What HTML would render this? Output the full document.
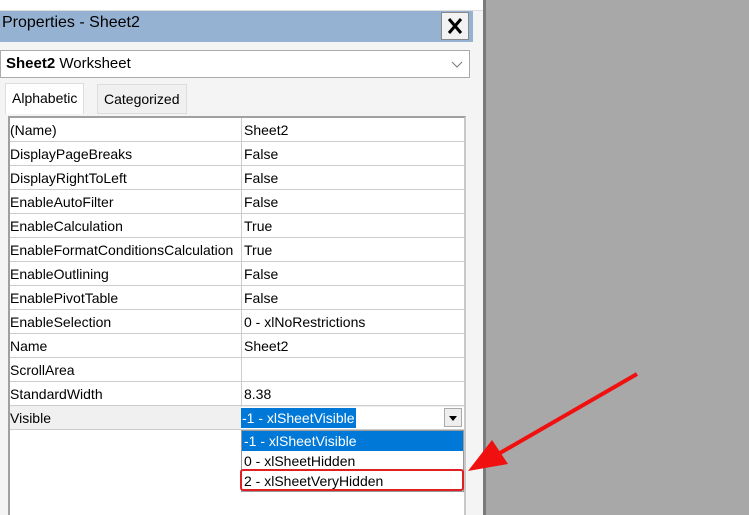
<!DOCTYPE html>
<html style="height:515px;overflow:hidden"><head><style>
body{margin:0;width:749px;height:515px;overflow:hidden;background:#a8a8a8;font-family:"Liberation Sans",sans-serif;font-size:14px;color:#000;position:relative}
.panel{position:absolute;left:0;top:10px;width:483px;height:505px;background:#f4f4f4}
.edge{position:absolute;left:483px;top:0;width:3px;height:515px;background:#7a7a7a}
.title{position:absolute;left:0;top:11px;width:473px;height:31px;background:#96b2d2;font-size:16px;line-height:24px;padding-left:2px;box-sizing:border-box}
.x{position:absolute;left:441px;top:12px;width:28px;height:28px;background:#f2f2f2;border:1px solid #888;box-sizing:border-box}
.combo{position:absolute;left:0;top:50px;width:470px;height:28px;background:#fff;border:1px solid #aaa;box-sizing:border-box;line-height:26px;padding-left:5px;font-size:15px}
.tab{position:absolute;top:84px;height:28px;line-height:28px;font-size:14px;padding:0 6px}
.grid{position:absolute;left:8px;top:116px;width:458px;height:399px;background:#fff;border:2px solid #a0a0a0;border-right-color:#c8c8c8;border-bottom:none;box-sizing:border-box}
.row{position:absolute;left:10px;width:454px;height:24px;border-bottom:1px solid #ccc;box-sizing:border-box;line-height:24px}
.row span{position:absolute;left:0;white-space:nowrap}
.row b{font-weight:normal;position:absolute;left:234px}
.row:before{content:"";position:absolute;left:231px;top:0;height:24px;border-left:1px solid #ccc}
.dd{position:absolute;left:241px;top:407px;width:223px;height:22px;background:#fff}
.list{position:absolute;left:241px;top:430px;width:223px;height:62px;background:#fff;border:1px solid #999;box-sizing:border-box}
.list div{height:20px;line-height:20px;padding-left:2px}
</style></head><body>
<div class="panel"></div>
<div style="position:absolute;left:0;top:0;width:483px;height:10px;background:#fff;border-bottom:1px solid #ddd"></div>
<div class="edge"></div>
<div class="title">Properties - Sheet2</div>
<div class="x"><svg width="26" height="26"><path d="M7 6L19 20M19 6L7 20" stroke="#000" stroke-width="3"/></svg></div>
<div class="combo"><b>Sheet2</b> Worksheet<svg style="position:absolute;right:6px;top:10px" width="12" height="8"><path d="M1 1L6 6L11 1" stroke="#777" fill="none"/></svg></div>
<div class="tab" style="left:5px;background:#fff;border:1px solid #ddd;border-bottom:none;top:83px;height:30px">Alphabetic</div>
<div class="tab" style="left:97px;background:#f0f0f0;border:1px solid #ddd">Categorized</div>
<div class="grid"></div>
<div class="row" style="top:118px"><span>(Name)</span><b>Sheet2</b></div>
<div class="row" style="top:142px"><span>DisplayPageBreaks</span><b>False</b></div>
<div class="row" style="top:166px"><span>DisplayRightToLeft</span><b>False</b></div>
<div class="row" style="top:190px"><span>EnableAutoFilter</span><b>False</b></div>
<div class="row" style="top:214px"><span>EnableCalculation</span><b>True</b></div>
<div class="row" style="top:238px"><span style="width:231px;overflow:hidden">EnableFormatConditionsCalculation</span><b>True</b></div>
<div class="row" style="top:262px"><span>EnableOutlining</span><b>False</b></div>
<div class="row" style="top:286px"><span>EnablePivotTable</span><b>False</b></div>
<div class="row" style="top:310px"><span>EnableSelection</span><b>0 - xlNoRestrictions</b></div>
<div class="row" style="top:334px"><span>Name</span><b>Sheet2</b></div>
<div class="row" style="top:358px"><span>ScrollArea</span><b></b></div>
<div class="row" style="top:382px"><span>StandardWidth</span><b>8.38</b></div>
<div class="row" style="top:406px;background:#f0f0f0"><span>Visible</span></div>
<div class="dd"><span style="background:#0078d7;color:#fff;padding:0 1px;line-height:20px;display:inline-block;margin-top:1px">-1 - xlSheetVisible</span>
<div style="position:absolute;right:2px;top:1px;width:18px;height:19px;background:#eee;border:1px solid #aaa;box-sizing:border-box"><svg width="16" height="17"><path d="M4 7L12 7L8 12Z" fill="#000"/></svg></div></div>
<div class="list"><div style="background:#0078d7;color:#fff">-1 - xlSheetVisible</div><div>0 - xlSheetHidden</div><div>2 - xlSheetVeryHidden</div></div>
<div style="position:absolute;left:240px;top:469px;width:224px;height:22px;border:2px solid #e02020;border-radius:3px;box-sizing:border-box"></div>
<svg style="position:absolute;left:0;top:0" width="749" height="515"><path d="M637 374L500 453" stroke="#f01010" stroke-width="4"/><path d="M468 471L492 440L508 464Z" fill="#f01010"/></svg>
</body></html>
